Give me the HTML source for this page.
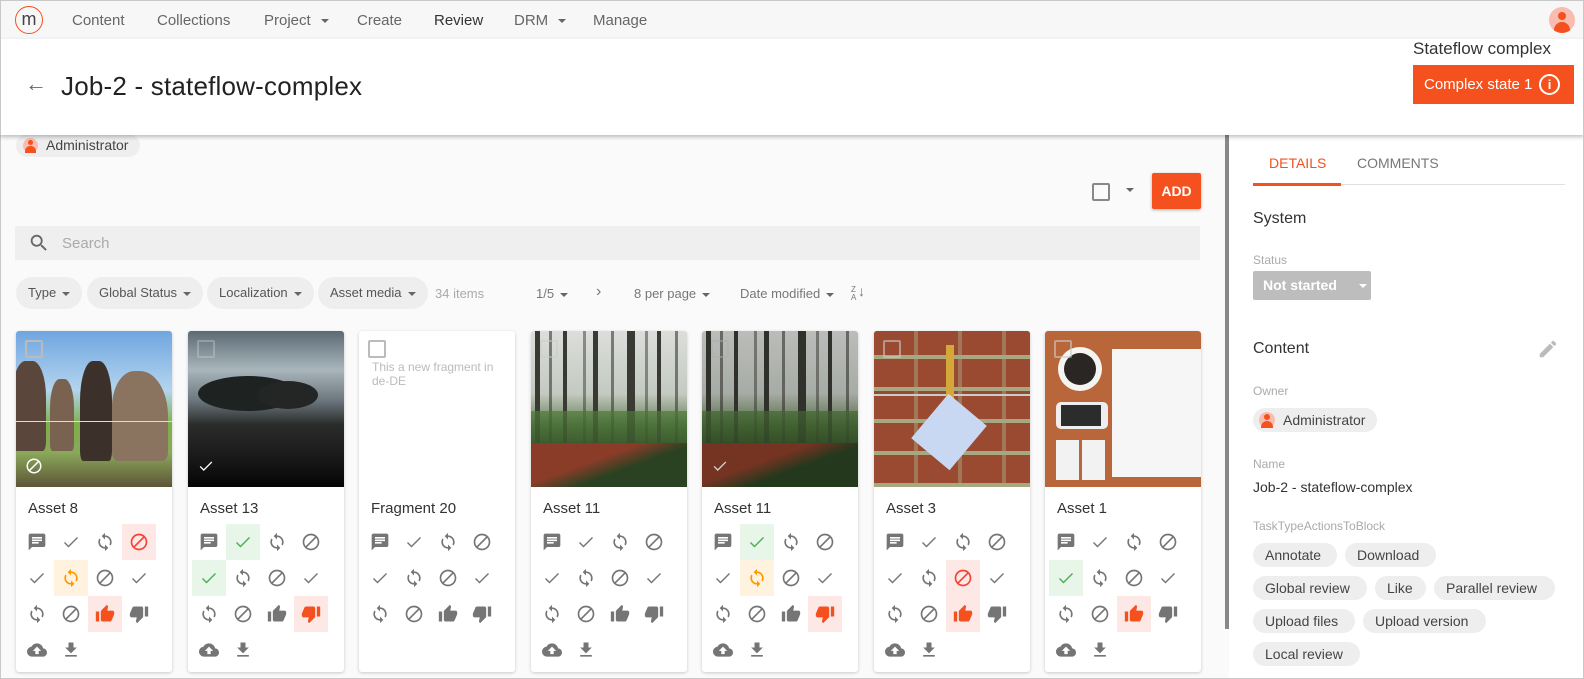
<!DOCTYPE html>
<html><head><meta charset="utf-8"><style>
*{box-sizing:border-box;margin:0;padding:0}
body{width:1584px;height:679px;overflow:hidden;font-family:"Liberation Sans",sans-serif;background:#fafafa;position:relative;color:#222}
.a{position:absolute}
.nav{left:0;top:0;width:1584px;height:39px;background:#f7f7f7;border:1px solid #c8c8c8;border-bottom:none}
.nav span{position:absolute;top:11px;font-size:15px;color:#666}
.hdr{left:0;top:39px;width:1584px;height:96px;background:#fff;box-shadow:0 2px 4px rgba(0,0,0,.25);z-index:3;border-left:1px solid #c8c8c8;border-right:1px solid #c8c8c8}
.chip{position:absolute;background:#eeeeee;border-radius:14px;font-size:14px;color:#444;height:24px;line-height:24px;padding:0 12px}
.fchip{position:absolute;top:277px;height:32px;line-height:32px;background:#eeeeee;border-radius:16px;font-size:13px;color:#555;padding:0 12px}
.caret{display:inline-block;width:0;height:0;border-left:4px solid transparent;border-right:4px solid transparent;border-top:4px solid #666;vertical-align:middle;margin-left:6px}
.gt{position:absolute;top:283px;font-size:13px;color:#777}
.card{position:absolute;top:331px;width:156px;height:341px;background:#fff;border-radius:3px;box-shadow:0 1px 3px rgba(0,0,0,.2);overflow:hidden}
.img{position:absolute;left:0;top:0;width:156px;height:156px;overflow:hidden}
.cb{position:absolute;left:9px;top:9px;width:18px;height:18px;border:2px solid #bbb;border-radius:2px}
.title{position:absolute;left:12px;top:169px;font-size:15px;color:#333}
.grid{position:absolute;left:4px;top:193px}
.c{position:absolute;width:34px;height:36px;display:flex;align-items:center;justify-content:center}
.c svg{width:20px;height:20px;fill:#757575}
.r{background:#fde8e6}.r svg{fill:#f44336}
.g{background:#e8f5e9}.g svg{fill:#4caf50}
.o{background:#fff3e0}.o svg{fill:#ff9800}
.ro{background:#fde8e6}.ro svg{fill:#f4511e}
.lbl{position:absolute;left:1253px;font-size:12px;color:#aaa}
.fo{background:linear-gradient(#dcdedb 0%,#c4cac2 40%,#5c7a48 62%,#2f4a26 80%,#7a3a28 100%)}
.tr{position:absolute;top:0;height:120px;background:#3a3a34}
</style></head><body>
<svg width="0" height="0" style="position:absolute">
<defs>
<symbol id="msg" viewBox="0 0 24 24"><path d="M20 2H4c-1.1 0-2 .9-2 2v18l4-4h14c1.1 0 2-.9 2-2V4c0-1.1-.9-2-2-2zM6 9h12v2H6V9zm8 5H6v-2h8v2zm4-6H6V6h12v2z"/></symbol>
<symbol id="chk" viewBox="0 0 24 24"><path d="M9 16.2L4.8 12l-1.2 1.2L9 18.6 20.4 7.2 19.2 6z"/></symbol>
<symbol id="syn" viewBox="0 0 24 24"><path d="M12 4V1L8 5l4 4V6c3.31 0 6 2.690 6 6 0 1.01-.25 1.97-.7 2.8l1.46 1.46C19.54 15.03 20 13.57 20 12c0-4.42-3.58-8-8-8zm0 14c-3.31 0-6-2.69-6-6 0-1.01.25-1.97.7-2.8L5.24 7.74C4.46 8.97 4 10.43 4 12c0 4.42 3.58 8 8 8v3l4-4-4-4v3z"/></symbol>
<symbol id="blk" viewBox="0 0 24 24"><path d="M12 2C6.48 2 2 6.48 2 12s4.48 10 10 10 10-4.48 10-10S17.52 2 12 2zM4 12c0-4.420 3.58-8 8-8 1.85 0 3.55.63 4.9 1.69L5.69 16.9C4.63 15.55 4 13.85 4 12zm8 8c-1.85 0-3.55-.63-4.9-1.69L18.31 7.1C19.37 8.45 20 10.15 20 12c0 4.42-3.58 8-8 8z"/></symbol>
<symbol id="up" viewBox="0 0 24 24"><path d="M1 21h4V9H1v12zm22-11c0-1.1-.9-2-2-2h-6.31l.95-4.57.03-.32c0-.41-.17-.79-.44-1.06L14.17 1 7.59 7.59C7.22 7.95 7 8.45 7 9v10c0 1.1.9 2 2 2h9c.83 0 1.54-.5 1.84-1.22l3.02-7.05c.09-.23.14-.47.14-.73v-2z"/></symbol>
<symbol id="dn" viewBox="0 0 24 24"><path d="M15 3H6c-.83 0-1.54.5-1.84 1.22l-3.02 7.05c-.09.23-.14.47-.14.73v2c0 1.1.9 2 2 2h6.31l-.95 4.57-.03.32c0 .41.17.79.44 1.06L9.83 23l6.59-6.59c.36-.36.58-.86.58-1.41V5c0-1.1-.9-2-2-2zm4 0v12h4V3h-4z"/></symbol>
<symbol id="upl" viewBox="0 0 24 24"><path d="M19.35 10.04C18.67 6.59 15.64 4 12 4 9.11 4 6.6 5.64 5.35 8.04 2.34 8.36 0 10.91 0 14c0 3.31 2.69 6 6 6h13c2.76 0 5-2.24 5-5 0-2.64-2.05-4.780-4.65-4.96zM14 13v4h-4v-4H7l5-5 5 5h-3z"/></symbol>
<symbol id="dl" viewBox="0 0 24 24"><path d="M19 9h-4V3H9v6H5l7 7 7-7zM5 18v2h14v-2H5z"/></symbol>
</defs></svg>

<div class="a nav">
 <div class="a" style="left:14px;top:5px;width:28px;height:28px;border:1.5px solid #f4511e;border-radius:50%;font-size:18px;text-align:center;line-height:24px;color:#444">m</div>
 <span style="left:71px">Content</span><span style="left:156px">Collections</span>
 <span style="left:263px">Project <i class="caret"></i></span><span style="left:356px">Create</span>
 <span style="left:433px;color:#333">Review</span><span style="left:513px">DRM <i class="caret"></i></span>
 <span style="left:592px">Manage</span>
 <div class="a" style="left:1548px;top:6px;width:26px;height:26px;border-radius:50%;background:#f9bcae;overflow:hidden"><div class="a" style="left:9px;top:5px;width:8px;height:8px;border-radius:50%;background:#f4511e"></div><div class="a" style="left:5px;top:15px;width:16px;height:12px;border-radius:8px 8px 0 0;background:#f4511e"></div></div>
</div>
<div class="a hdr">
 <div class="a" style="left:24px;top:32px;font-size:22px;color:#666">&#8592;</div>
 <div class="a" style="left:60px;top:32px;font-size:26px;color:#222;letter-spacing:.2px">Job-2 - stateflow-complex</div>
 <div class="a" style="left:1412px;top:0px;font-size:17px;color:#333">Stateflow complex</div>
 <div class="a" style="left:1412px;top:26px;width:161px;height:39px;background:#f4511e;color:#fff;font-size:15px;line-height:39px;padding-left:11px">Complex state 1
  <span class="a" style="left:126px;top:9px;width:21px;height:21px;border:2px solid #fff;border-radius:50%;font-size:13px;line-height:17px;text-align:center;font-weight:bold">i</span></div>
</div>
<div class="a" style="left:0;top:135px;width:1px;height:544px;background:#c8c8c8"></div>
<div class="a" style="left:1583px;top:0;width:1px;height:679px;background:#c8c8c8;z-index:5"></div>

<div class="chip" style="left:16px;top:134px;height:23px;line-height:23px;padding-left:30px">Administrator<span class="a" style="left:7px;top:4px;width:15px;height:15px;border-radius:50%;background:#f9bcae"><i class="a" style="left:5px;top:2px;width:5px;height:5px;border-radius:50%;background:#f4511e"></i><i class="a" style="left:2px;top:8px;width:11px;height:7px;border-radius:5px 5px 0 0;background:#f4511e"></i></span></div>

<div class="a" style="left:1092px;top:183px;width:18px;height:18px;border:2px solid #888;border-radius:2px"></div>
<div class="a" style="left:1120px;top:184px;line-height:12px"><i class="caret"></i></div>
<div class="a" style="left:1152px;top:173px;width:49px;height:36px;background:#f4511e;color:#fff;font-weight:bold;font-size:14px;line-height:36px;text-align:center;border-radius:2px;box-shadow:0 1px 3px rgba(0,0,0,.3)">ADD</div>

<div class="a" style="left:15px;top:226px;width:1185px;height:34px;background:#efefef"></div>
<svg class="a" style="left:28px;top:232px" width="22" height="22" viewBox="0 0 24 24"><path fill="#666" d="M15.5 14h-.79l-.28-.27C15.41 12.59 16 11.11 16 9.5 16 5.91 13.09 3 9.5 3S3 5.91 3 9.5 5.91 16 9.5 16c1.61 0 3.09-.59 4.23-1.57l.27.28v.79l5 4.99L20.49 19l-4.99-5zm-6 0C7.01 14 5 11.99 5 9.5S7.01 5 9.5 5 14 7.01 14 9.5 11.99 14 9.5 14z"/></svg>
<div class="a" style="left:62px;top:235px;font-size:15px;color:#aaa">Search</div>

<div class="fchip" style="left:16px">Type<i class="caret"></i></div>
<div class="fchip" style="left:87px">Global Status<i class="caret"></i></div>
<div class="fchip" style="left:207px">Localization<i class="caret"></i></div>
<div class="fchip" style="left:318px">Asset media<i class="caret"></i></div>
<div class="gt" style="left:435px;top:286px;color:#aaa">34 items</div>
<div class="gt" style="left:536px;top:286px">1/5<i class="caret"></i></div>
<div class="gt" style="left:596px;font-size:16px;top:283px">&#8250;</div>
<div class="gt" style="left:634px;top:286px">8 per page<i class="caret"></i></div>
<div class="gt" style="left:740px;top:286px">Date modified<i class="caret"></i></div>
<div class="gt" style="left:851px;font-size:8px;line-height:8px;top:286px">Z<br>A</div><div class="gt" style="left:858px;top:283px;font-size:14px">&#8595;</div>

<!-- cards -->
<div class="card" style="left:16px">
 <div class="img" style="background:linear-gradient(#6fa6e0 0%,#b4d4ee 38%,#7fae4a 60%,#8aa85a 78%,#5e5438 100%)">
  <div class="a" style="left:-4px;top:30px;width:34px;height:90px;background:#5a463a;border-radius:40% 40% 10% 10%"></div>
  <div class="a" style="left:34px;top:48px;width:24px;height:72px;background:#7a6250;border-radius:40% 40% 10% 10%"></div>
  <div class="a" style="left:64px;top:30px;width:32px;height:100px;background:#3c302a;border-radius:40% 40% 10% 10%"></div>
  <div class="a" style="left:96px;top:40px;width:56px;height:90px;background:#8a7460;border-radius:40% 50% 10% 10%"></div>
  <div class="a" style="left:0;top:90px;width:156px;height:1px;background:#ddd"></div>
  <div class="cb"></div>
  <svg class="a" style="left:9px;top:126px" width="18" height="18"><use href="#blk" fill="#fff"/></svg>
 </div>
 <div class="title">Asset 8</div>
 <div class="grid">
  <div class="c" style="left:0;top:0"><svg><use href="#msg"/></svg></div><div class="c" style="left:34px;top:0"><svg><use href="#chk"/></svg></div><div class="c" style="left:68px;top:0"><svg><use href="#syn"/></svg></div><div class="c r" style="left:102px;top:0"><svg><use href="#blk"/></svg></div>
  <div class="c" style="left:0;top:36px"><svg><use href="#chk"/></svg></div><div class="c o" style="left:34px;top:36px"><svg><use href="#syn"/></svg></div><div class="c" style="left:68px;top:36px"><svg><use href="#blk"/></svg></div><div class="c" style="left:102px;top:36px"><svg><use href="#chk"/></svg></div>
  <div class="c" style="left:0;top:72px"><svg><use href="#syn"/></svg></div><div class="c" style="left:34px;top:72px"><svg><use href="#blk"/></svg></div><div class="c ro" style="left:68px;top:72px"><svg><use href="#up"/></svg></div><div class="c" style="left:102px;top:72px"><svg><use href="#dn"/></svg></div>
  <div class="c" style="left:0;top:108px"><svg><use href="#upl"/></svg></div><div class="c" style="left:34px;top:108px"><svg><use href="#dl"/></svg></div>
 </div>
</div>

<div class="card" style="left:188px">
 <div class="img" style="background:linear-gradient(#5c6a74 0%,#a9b6bc 25%,#6a747c 45%,#2a2c2a 60%,#1a1a1a 80%,#050505 100%)">
  <div class="a" style="left:10px;top:45px;width:100px;height:35px;border-radius:50%;background:#1e2220"></div>
  <div class="a" style="left:70px;top:50px;width:60px;height:28px;border-radius:50%;background:#232624"></div>
  <div class="cb" style="border-color:#ccc;opacity:.4"></div>
  <svg class="a" style="left:9px;top:126px" width="18" height="18"><use href="#chk" fill="#fff"/></svg>
 </div>
 <div class="title">Asset 13</div>
 <div class="grid">
  <div class="c" style="left:0;top:0"><svg><use href="#msg"/></svg></div><div class="c g" style="left:34px;top:0"><svg><use href="#chk"/></svg></div><div class="c" style="left:68px;top:0"><svg><use href="#syn"/></svg></div><div class="c" style="left:102px;top:0"><svg><use href="#blk"/></svg></div>
  <div class="c g" style="left:0;top:36px"><svg><use href="#chk"/></svg></div><div class="c" style="left:34px;top:36px"><svg><use href="#syn"/></svg></div><div class="c" style="left:68px;top:36px"><svg><use href="#blk"/></svg></div><div class="c" style="left:102px;top:36px"><svg><use href="#chk"/></svg></div>
  <div class="c" style="left:0;top:72px"><svg><use href="#syn"/></svg></div><div class="c" style="left:34px;top:72px"><svg><use href="#blk"/></svg></div><div class="c" style="left:68px;top:72px"><svg><use href="#up"/></svg></div><div class="c ro" style="left:102px;top:72px"><svg><use href="#dn"/></svg></div>
  <div class="c" style="left:0;top:108px"><svg><use href="#upl"/></svg></div><div class="c" style="left:34px;top:108px"><svg><use href="#dl"/></svg></div>
 </div>
</div>

<div class="card" style="left:359px">
 <div class="cb"></div>
 <div class="a" style="left:13px;top:29px;font-size:12px;color:#bbb;line-height:14px;width:130px">This a new fragment in de-DE</div>
 <div class="title">Fragment 20</div>
 <div class="grid">
  <div class="c" style="left:0;top:0"><svg><use href="#msg"/></svg></div><div class="c" style="left:34px;top:0"><svg><use href="#chk"/></svg></div><div class="c" style="left:68px;top:0"><svg><use href="#syn"/></svg></div><div class="c" style="left:102px;top:0"><svg><use href="#blk"/></svg></div>
  <div class="c" style="left:0;top:36px"><svg><use href="#chk"/></svg></div><div class="c" style="left:34px;top:36px"><svg><use href="#syn"/></svg></div><div class="c" style="left:68px;top:36px"><svg><use href="#blk"/></svg></div><div class="c" style="left:102px;top:36px"><svg><use href="#chk"/></svg></div>
  <div class="c" style="left:0;top:72px"><svg><use href="#syn"/></svg></div><div class="c" style="left:34px;top:72px"><svg><use href="#blk"/></svg></div><div class="c" style="left:68px;top:72px"><svg><use href="#up"/></svg></div><div class="c" style="left:102px;top:72px"><svg><use href="#dn"/></svg></div>
 </div>
</div>

<div class="card" style="left:531px">
 <div class="img fo">
  <i class="tr" style="left:4px;width:5px"></i><i class="tr" style="left:18px;width:3px;opacity:.6"></i><i class="tr" style="left:32px;width:4px"></i><i class="tr" style="left:52px;width:3px;opacity:.5"></i><i class="tr" style="left:62px;width:5px"></i><i class="tr" style="left:80px;width:3px;opacity:.6"></i><i class="tr" style="left:96px;width:8px"></i><i class="tr" style="left:114px;width:3px;opacity:.5"></i><i class="tr" style="left:126px;width:4px"></i><i class="tr" style="left:144px;width:3px;opacity:.6"></i>
  <div class="a" style="left:0;top:80px;width:156px;height:50px;background:linear-gradient(#4e7a38,#2f4a26);opacity:.7"></div>
  <div class="a" style="left:0;top:112px;width:156px;height:44px;background:linear-gradient(160deg,#8a3c28 0 40%,#2a4222 60%)"></div>
  <div class="cb" style="border-color:#ccc;opacity:.5"></div>
 </div>
 <div class="title">Asset 11</div>
 <div class="grid">
  <div class="c" style="left:0;top:0"><svg><use href="#msg"/></svg></div><div class="c" style="left:34px;top:0"><svg><use href="#chk"/></svg></div><div class="c" style="left:68px;top:0"><svg><use href="#syn"/></svg></div><div class="c" style="left:102px;top:0"><svg><use href="#blk"/></svg></div>
  <div class="c" style="left:0;top:36px"><svg><use href="#chk"/></svg></div><div class="c" style="left:34px;top:36px"><svg><use href="#syn"/></svg></div><div class="c" style="left:68px;top:36px"><svg><use href="#blk"/></svg></div><div class="c" style="left:102px;top:36px"><svg><use href="#chk"/></svg></div>
  <div class="c" style="left:0;top:72px"><svg><use href="#syn"/></svg></div><div class="c" style="left:34px;top:72px"><svg><use href="#blk"/></svg></div><div class="c" style="left:68px;top:72px"><svg><use href="#up"/></svg></div><div class="c" style="left:102px;top:72px"><svg><use href="#dn"/></svg></div>
  <div class="c" style="left:0;top:108px"><svg><use href="#upl"/></svg></div><div class="c" style="left:34px;top:108px"><svg><use href="#dl"/></svg></div>
 </div>
</div>

<div class="card" style="left:702px">
 <div class="img fo" style="filter:brightness(.85)">
  <i class="tr" style="left:4px;width:5px"></i><i class="tr" style="left:18px;width:3px;opacity:.6"></i><i class="tr" style="left:32px;width:4px"></i><i class="tr" style="left:52px;width:3px;opacity:.5"></i><i class="tr" style="left:62px;width:5px"></i><i class="tr" style="left:80px;width:3px;opacity:.6"></i><i class="tr" style="left:96px;width:8px"></i><i class="tr" style="left:114px;width:3px;opacity:.5"></i><i class="tr" style="left:126px;width:4px"></i><i class="tr" style="left:144px;width:3px;opacity:.6"></i>
  <div class="a" style="left:0;top:80px;width:156px;height:50px;background:linear-gradient(#4e7a38,#2f4a26);opacity:.7"></div>
  <div class="a" style="left:0;top:112px;width:156px;height:44px;background:linear-gradient(160deg,#8a3c28 0 40%,#2a4222 60%)"></div>
  <div class="cb" style="border-color:#ccc;opacity:.5"></div>
  <svg class="a" style="left:9px;top:126px" width="18" height="18"><use href="#chk" fill="#fff"/></svg>
 </div>
 <div class="title">Asset 11</div>
 <div class="grid">
  <div class="c" style="left:0;top:0"><svg><use href="#msg"/></svg></div><div class="c g" style="left:34px;top:0"><svg><use href="#chk"/></svg></div><div class="c" style="left:68px;top:0"><svg><use href="#syn"/></svg></div><div class="c" style="left:102px;top:0"><svg><use href="#blk"/></svg></div>
  <div class="c" style="left:0;top:36px"><svg><use href="#chk"/></svg></div><div class="c o" style="left:34px;top:36px"><svg><use href="#syn"/></svg></div><div class="c" style="left:68px;top:36px"><svg><use href="#blk"/></svg></div><div class="c" style="left:102px;top:36px"><svg><use href="#chk"/></svg></div>
  <div class="c" style="left:0;top:72px"><svg><use href="#syn"/></svg></div><div class="c" style="left:34px;top:72px"><svg><use href="#blk"/></svg></div><div class="c" style="left:68px;top:72px"><svg><use href="#up"/></svg></div><div class="c ro" style="left:102px;top:72px"><svg><use href="#dn"/></svg></div>
  <div class="c" style="left:0;top:108px"><svg><use href="#upl"/></svg></div><div class="c" style="left:34px;top:108px"><svg><use href="#dl"/></svg></div>
 </div>
</div>

<div class="card" style="left:874px">
 <div class="img" style="background:repeating-linear-gradient(0deg,#a6a882 0 4px,#9a4a30 4px 32px),#9a4a30">
  <div class="a" style="left:0;top:0;width:156px;height:156px;background:repeating-linear-gradient(90deg,transparent 0 40px,rgba(166,168,130,.8) 40px 44px);opacity:.6"></div>
  <div class="a" style="left:0;top:63px;width:156px;height:2px;background:#ccc"></div>
  <div class="a" style="left:72px;top:14px;width:8px;height:60px;background:#d4a838"></div>
  <div class="a" style="top:72px;width:50px;height:58px;background:#c9d8f2;transform:rotate(40deg);left:50px"></div>
  <div class="cb" style="border-color:#ccc;opacity:.6"></div>
 </div>
 <div class="title">Asset 3</div>
 <div class="grid">
  <div class="c" style="left:0;top:0"><svg><use href="#msg"/></svg></div><div class="c" style="left:34px;top:0"><svg><use href="#chk"/></svg></div><div class="c" style="left:68px;top:0"><svg><use href="#syn"/></svg></div><div class="c" style="left:102px;top:0"><svg><use href="#blk"/></svg></div>
  <div class="c" style="left:0;top:36px"><svg><use href="#chk"/></svg></div><div class="c" style="left:34px;top:36px"><svg><use href="#syn"/></svg></div><div class="c r" style="left:68px;top:36px"><svg><use href="#blk"/></svg></div><div class="c" style="left:102px;top:36px"><svg><use href="#chk"/></svg></div>
  <div class="c" style="left:0;top:72px"><svg><use href="#syn"/></svg></div><div class="c" style="left:34px;top:72px"><svg><use href="#blk"/></svg></div><div class="c ro" style="left:68px;top:72px"><svg><use href="#up"/></svg></div><div class="c" style="left:102px;top:72px"><svg><use href="#dn"/></svg></div>
  <div class="c" style="left:0;top:108px"><svg><use href="#upl"/></svg></div><div class="c" style="left:34px;top:108px"><svg><use href="#dl"/></svg></div>
 </div>
</div>

<div class="card" style="left:1045px">
 <div class="img" style="background:#b8663a">
  <div class="a" style="left:13px;top:16px;width:44px;height:44px;border-radius:50%;background:#f4f4f0"></div>
  <div class="a" style="left:19px;top:22px;width:32px;height:32px;border-radius:50%;background:#2a2624"></div>
  <div class="a" style="left:11px;top:71px;width:52px;height:27px;border-radius:5px;background:#eee"></div>
  <div class="a" style="left:16px;top:74px;width:40px;height:21px;background:#2c2c2c"></div>
  <div class="a" style="left:11px;top:109px;width:23px;height:40px;background:#f2f2f2"></div>
  <div class="a" style="left:37px;top:109px;width:23px;height:40px;background:#f2f2f2"></div>
  <div class="a" style="left:67px;top:18px;width:89px;height:128px;background:#f6f6f6"></div>
  <div class="cb" style="border-color:#ccc;opacity:.6"></div>
 </div>
 <div class="title">Asset 1</div>
 <div class="grid">
  <div class="c" style="left:0;top:0"><svg><use href="#msg"/></svg></div><div class="c" style="left:34px;top:0"><svg><use href="#chk"/></svg></div><div class="c" style="left:68px;top:0"><svg><use href="#syn"/></svg></div><div class="c" style="left:102px;top:0"><svg><use href="#blk"/></svg></div>
  <div class="c g" style="left:0;top:36px"><svg><use href="#chk"/></svg></div><div class="c" style="left:34px;top:36px"><svg><use href="#syn"/></svg></div><div class="c" style="left:68px;top:36px"><svg><use href="#blk"/></svg></div><div class="c" style="left:102px;top:36px"><svg><use href="#chk"/></svg></div>
  <div class="c" style="left:0;top:72px"><svg><use href="#syn"/></svg></div><div class="c" style="left:34px;top:72px"><svg><use href="#blk"/></svg></div><div class="c ro" style="left:68px;top:72px"><svg><use href="#up"/></svg></div><div class="c" style="left:102px;top:72px"><svg><use href="#dn"/></svg></div>
  <div class="c" style="left:0;top:108px"><svg><use href="#upl"/></svg></div><div class="c" style="left:34px;top:108px"><svg><use href="#dl"/></svg></div>
 </div>
</div>

<!-- right panel -->
<div class="a" style="left:1225px;top:135px;width:4px;height:494px;background:#888"></div>
<div class="a" style="left:1229px;top:135px;width:354px;height:544px;background:#fff"></div>
<div class="a" style="left:1269px;top:155px;font-size:14px;color:#f4511e">DETAILS</div>
<div class="a" style="left:1357px;top:155px;font-size:14px;color:#777">COMMENTS</div>
<div class="a" style="left:1253px;top:184px;width:312px;height:1px;background:#e0e0e0"></div>
<div class="a" style="left:1253px;top:183px;width:88px;height:3px;background:#f4511e"></div>
<div class="a" style="left:1253px;top:210px;font-size:16px;color:#333">System</div>
<div class="lbl" style="top:253px">Status</div>
<div class="a" style="left:1253px;top:271px;width:118px;height:29px;background:#bdbdbd;border-radius:2px;color:#fff;font-weight:bold;font-size:14px;line-height:29px;padding-left:10px">Not started<span class="a" style="left:100px;top:0"><i class="caret" style="border-top-color:#fff"></i></span></div>
<div class="a" style="left:1253px;top:340px;font-size:16px;color:#333">Content</div>
<svg class="a" style="left:1537px;top:338px" width="22" height="22" viewBox="0 0 24 24"><path fill="#bbb" d="M3 17.25V21h3.75L17.81 9.94l-3.75-3.75L3 17.25zM20.71 7.04c.39-.39.39-1.02 0-1.41l-2.34-2.34a.996.996 0 0 0-1.41 0l-1.83 1.83 3.75 3.75 1.83-1.83z"/></svg>
<div class="lbl" style="top:384px">Owner</div>
<div class="chip" style="left:1253px;top:408px;padding-left:30px">Administrator<span class="a" style="left:6px;top:4px;width:16px;height:16px;border-radius:50%;background:#f9bcae"><i class="a" style="left:5px;top:2px;width:6px;height:6px;border-radius:50%;background:#f4511e"></i><i class="a" style="left:2px;top:9px;width:12px;height:7px;border-radius:6px 6px 0 0;background:#f4511e"></i></span></div>
<div class="lbl" style="top:457px">Name</div>
<div class="a" style="left:1253px;top:479px;font-size:14px;color:#333">Job-2 - stateflow-complex</div>
<div class="lbl" style="top:519px">TaskTypeActionsToBlock</div>
<div class="chip" style="left:1253px;top:543px;width:84px">Annotate</div>
<div class="chip" style="left:1345px;top:543px;width:91px">Download</div>
<div class="chip" style="left:1253px;top:576px;width:114px">Global review</div>
<div class="chip" style="left:1375px;top:576px;width:51px">Like</div>
<div class="chip" style="left:1434px;top:576px;width:121px">Parallel review</div>
<div class="chip" style="left:1253px;top:609px;width:102px">Upload files</div>
<div class="chip" style="left:1363px;top:609px;width:123px">Upload version</div>
<div class="chip" style="left:1253px;top:642px;width:107px">Local review</div>
<div class="a" style="left:0;top:678px;width:1584px;height:1px;background:#c8c8c8;z-index:5"></div>
</body></html>
